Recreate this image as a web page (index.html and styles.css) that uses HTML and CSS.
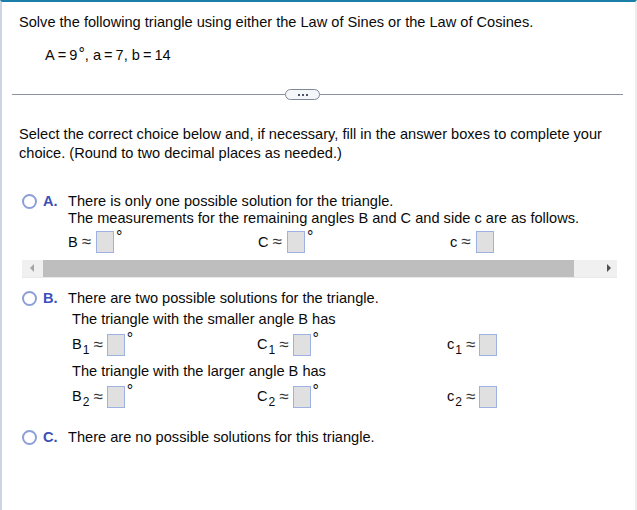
FILE: index.html
```html
<!DOCTYPE html>
<html>
<head>
<meta charset="utf-8">
<link rel="stylesheet" href="styles.css">
</head>
<body>
<div class="frame">
  <div class="question">
    <p class="prompt">Solve the following triangle using either the Law of Sines or the Law of Cosines.</p>
    <p class="given">A<span class="eq">=</span>9<span class="sdeg">°</span>, a<span class="eq">=</span>7, b<span class="eq">=</span>14</p>
  </div>
  <div class="divider">
    <span class="line first"></span>
    <span class="more"><i></i><i></i><i></i></span>
    <span class="line"></span>
  </div>
  <p class="instructions">Select the correct choice below and, if necessary, fill in the answer boxes to complete your choice. (Round to two decimal places as needed.)</p>

  <div class="choice choice-a">
    <span class="radio"></span>
    <span class="letter">A.</span>
    <div class="body">
      <div class="text">There is only one possible solution for the triangle.</div>
      <div class="text">The measurements for the remaining angles B and C and side c are as follows.</div>
      <div class="answers">
        <span class="ans w1"><span class="lbl">B</span><span class="approx">≈</span><span class="box"></span><span class="deg">°</span></span>
        <span class="ans w2"><span class="lbl">C</span><span class="approx">≈</span><span class="box"></span><span class="deg">°</span></span>
        <span class="ans"><span class="lbl">c</span><span class="approx">≈</span><span class="box"></span></span>
      </div>
    </div>
  </div>

  <div class="scrollbar">
    <span class="arrow left"></span>
    <span class="thumb"></span>
    <span class="gap"></span>
    <span class="arrow right"></span>
  </div>

  <div class="choice choice-b">
    <span class="radio"></span>
    <span class="letter">B.</span>
    <div class="body">
      <div class="text">There are two possible solutions for the triangle.</div>
      <div class="sub">
        <div class="text">The triangle with the smaller angle B has</div>
        <div class="answers">
          <span class="ans v1"><span class="lbl">B<span class="idx">1</span></span><span class="approx">≈</span><span class="box"></span><span class="deg">°</span></span>
          <span class="ans v2"><span class="lbl">C<span class="idx">1</span></span><span class="approx">≈</span><span class="box"></span><span class="deg">°</span></span>
          <span class="ans"><span class="lbl">c<span class="idx">1</span></span><span class="approx">≈</span><span class="box"></span></span>
        </div>
        <div class="text gapline">The triangle with the larger angle B has</div>
        <div class="answers">
          <span class="ans v1"><span class="lbl">B<span class="idx">2</span></span><span class="approx">≈</span><span class="box"></span><span class="deg">°</span></span>
          <span class="ans v2"><span class="lbl">C<span class="idx">2</span></span><span class="approx">≈</span><span class="box"></span><span class="deg">°</span></span>
          <span class="ans"><span class="lbl">c<span class="idx">2</span></span><span class="approx">≈</span><span class="box"></span></span>
        </div>
      </div>
    </div>
  </div>

  <div class="choice choice-c">
    <span class="radio"></span>
    <span class="letter">C.</span>
    <div class="body">
      <div class="text">There are no possible solutions for this triangle.</div>
    </div>
  </div>
</div>
</body>
</html>
```

FILE: styles.css
```css
html, body {
  margin: 0;
  padding: 0;
  background: #ffffff;
}
body {
  font-family: "Liberation Sans", Arial, sans-serif;
  font-size: 14.6px;
  color: #0a0a0a;
}
.frame {
  box-sizing: border-box;
  width: 637px;
  height: 510px;
  border-top: 2px solid #1b7ea8;
  border-left: 2px solid #cdd3e3;
  border-right: 2px solid #ededed;
  padding: 0 0 0 17px;
  overflow: hidden;
}
p { margin: 0; }
.prompt {
  padding-top: 11px;
  line-height: 18px;
}
.given {
  margin-top: 15px;
  padding-left: 26px;
  line-height: 18px;
}
.eq { margin: 0 3px; }
.sdeg {
  font-size: 16px;
  line-height: 0;
  position: relative;
  top: -1px;
  margin-left: 1px;
}
.divider {
  display: flex;
  align-items: center;
  margin: 25px 12px 0 -7px;
  height: 11px;
}
.divider .line {
  flex: 1;
  height: 1px;
  background: #8b93a1;
}
.divider .line.first {
  flex: none;
  width: 273px;
}
.more {
  box-sizing: border-box;
  width: 35px;
  height: 11px;
  border: 1px solid #7f8898;
  border-radius: 6px;
  background: #f4f6f9;
  display: flex;
  justify-content: center;
  align-items: center;
  gap: 2px;
  flex: none;
}
.more i {
  width: 2px;
  height: 2px;
  background: #4b5566;
}
.instructions {
  margin-top: 25px;
  line-height: 19px;
  padding-right: 12px;
}
.choice {
  display: flex;
  align-items: flex-start;
}
.choice-a { margin-top: 30px; }
.radio {
  box-sizing: border-box;
  width: 15px;
  height: 15px;
  border: 2px solid #8c9fd6;
  border-radius: 50%;
  margin: 1px 0 0 3px;
  flex: none;
}
.letter {
  color: #3d4fb8;
  font-weight: bold;
  width: 31px;
  padding-left: 6px;
  box-sizing: border-box;
  line-height: 17px;
  flex: none;
}
.body { line-height: 17px; }
.answers {
  display: flex;
  align-items: center;
  height: 29px;
}
.ans {
  display: inline-flex;
  align-items: center;
}
.lbl {
  white-space: pre;
  line-height: 22px;
}
.approx {
  font-size: 17px;
  line-height: 22px;
  margin: 0 5px 0 4px;
  color: #333333;
}
.w1 { width: 190px; }
.w2 { width: 192px; }
.box {
  box-sizing: border-box;
  display: inline-block;
  width: 18px;
  height: 22px;
  background: #e0e0e0;
  border: 1px solid #9db2e2;
  flex: none;
}
.deg {
  align-self: flex-start;
  font-size: 16px;
  line-height: 14px;
  margin-left: 2px;
  margin-top: -1px;
}
.scrollbar {
  display: flex;
  width: 595px;
  height: 17px;
  margin: 4px 0 0 3px;
  background: #f0f0f0;
  border-bottom: 1px solid #e8e8e8;
}
.arrow {
  width: 21px;
  flex: none;
  position: relative;
}
.arrow.left::after {
  content: "";
  position: absolute;
  left: 8px;
  top: 4px;
  border-right: 4px solid #a3a3a3;
  border-top: 4px solid transparent;
  border-bottom: 4px solid transparent;
}
.arrow.right::after {
  content: "";
  position: absolute;
  left: 11px;
  top: 4px;
  border-left: 4px solid #505050;
  border-top: 4px solid transparent;
  border-bottom: 4px solid transparent;
}
.thumb {
  width: 531px;
  background: #bebebe;
  flex: none;
}
.gap { flex: 1; }
.choice-b { margin-top: 12px; }
.sub { padding-left: 4px; margin-top: 4px; }
.sub .text { line-height: 17px; }
.sub .gapline { margin-top: 2px; }
.choice-b .answers { height: 33px; }
.choice-b .approx { margin-left: 4px; margin-right: 4px; }
.v1 { width: 185px; }
.v2 { width: 190px; }
.idx {
  font-size: 12px;
  position: relative;
  top: 5px;
  margin-left: 1px;
}
.choice-c { margin-top: 16px; }
```
